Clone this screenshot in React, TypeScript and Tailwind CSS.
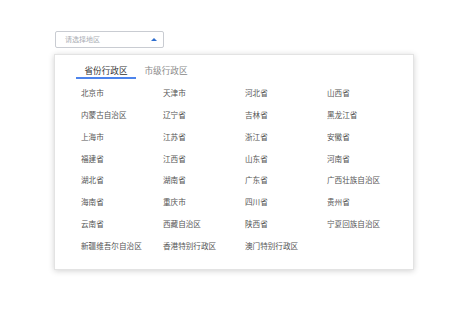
const provinces = [
  "北京市", "天津市", "河北省", "山西省",
  "内蒙古自治区", "辽宁省", "吉林省", "黑龙江省",
  "上海市", "江苏省", "浙江省", "安徽省",
  "福建省", "江西省", "山东省", "河南省",
  "湖北省", "湖南省", "广东省", "广西壮族自治区",
  "海南省", "重庆市", "四川省", "贵州省",
  "云南省", "西藏自治区", "陕西省", "宁夏回族自治区",
  "新疆维吾尔自治区", "香港特别行政区", "澳门特别行政区",
];

export default function App() {
  return (
    <div
      className="w-[474px] h-[314px] bg-white pl-[54px] pt-[31px] flex flex-col"
      style={{ fontFamily: '"Noto Sans CJK SC", "Noto Sans", sans-serif' }}
    >
      {/* 选择框 */}
      <div className="ml-px w-[109px] h-[17px] border border-[#c9ccd2] rounded-[2px] flex items-center justify-between pl-[9px] pr-[6px]">
        <span className="text-[7px] leading-none text-[#a9adb3]">请选择地区</span>
        <span className="w-0 h-0 border-l-[3px] border-r-[3px] border-b-[3px] border-l-transparent border-r-transparent border-b-[#2f6fd0]" />
      </div>

      {/* 下拉面板 */}
      <div className="mt-[6px] w-[360px] h-[216px] bg-white border border-[#e3e3e3] shadow-[0_1px_6px_rgba(0,0,0,0.18)] pt-[9px] pl-[21px]">
        <div className="flex">
          <div className="w-[60px] pb-px border-b-2 border-[#4d84ec] text-center text-[8.6px] leading-[12px] text-[#333]">
            省份行政区
          </div>
          <div className="w-[60px] pb-px border-b-2 border-transparent text-center text-[8.6px] leading-[12px] text-[#888]">
            市级行政区
          </div>
        </div>
        <div className="mt-[3px] pl-[5px] grid grid-cols-[82px_82px_82px_82px]">
          {provinces.map((p) => (
            <div key={p} className="h-[21.8px] flex items-center text-[7.6px] text-[#555] whitespace-nowrap">
              {p}
            </div>
          ))}
        </div>
      </div>
    </div>
  );
}
